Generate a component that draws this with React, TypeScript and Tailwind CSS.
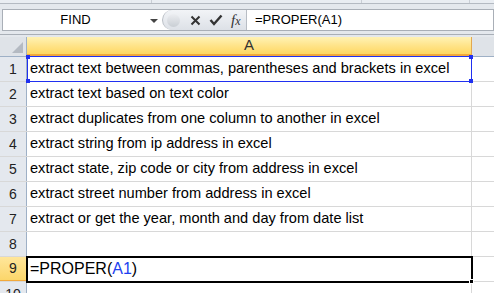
import React from "react";

const rows: string[] = [
  "extract text between commas, parentheses and brackets in excel",
  "extract text based on text color",
  "extract duplicates from one column to another in excel",
  "extract string from ip address in excel",
  "extract state, zip code or city from address in excel",
  "extract street number from address in excel",
  "extract or get the year, month and day from date list",
  "",
];

function FormulaBar() {
  return (
    <div className="flex h-[26px] items-center bg-[#e4e8ed] pl-[2px]">
      <div className="flex h-[22px] flex-1 items-stretch border border-[#a9afb7] bg-white">
        <div className="relative flex w-[159px] items-center justify-center text-[13px] text-black">
          <span className="mr-[14px]">FIND</span>
          <span className="absolute right-[4px] top-[9px] h-0 w-0 border-x-[4px] border-t-[4px] border-x-transparent border-t-[#444]" />
        </div>
        <div className="flex w-[84px] items-center rounded-l-full border-l border-[#b8bdc4] bg-gradient-to-b from-[#f2f4f7] to-[#dde1e7] pl-[4px]">
          <span className="h-[13px] w-[13px] rounded-full bg-gradient-to-b from-[#eceef1] to-[#c9ced4]" />
          <svg className="ml-[10px]" width="11" height="11" viewBox="0 0 11 11">
            <path d="M1.5 1.5 L9.5 9.5 M9.5 1.5 L1.5 9.5" stroke="#333" strokeWidth="2" />
          </svg>
          <svg className="ml-[8px]" width="14" height="12" viewBox="0 0 14 12">
            <path d="M1.5 6 L5 10 L12.5 1.5" stroke="#333" strokeWidth="2.4" fill="none" />
          </svg>
          <span className="ml-[8px] font-['Liberation_Serif',serif] text-[15px] italic text-[#333]">
            f<span className="text-[12px]">x</span>
          </span>
        </div>
        <div className="flex flex-1 items-center border-l border-[#b8bdc4] pl-[8px] text-[13px] text-black">
          =PROPER(A1)
        </div>
      </div>
    </div>
  );
}

function Row({ n, text }: { n: number; text: string }) {
  return (
    <div className="flex h-[25px] border-b border-[#d8d8d8]">
      <div className="flex w-[27px] shrink-0 items-center justify-center border-r border-[#9eb0c6] bg-[#e4e8ee] text-[14px] text-[#222]">
        {n}
      </div>
      <div className="flex w-[445px] shrink-0 items-center border-r border-[#d8d8d8] pl-[3px] text-[14.6px] text-black">
        {text}
      </div>
      <div className="flex-1" />
    </div>
  );
}

export default function App() {
  return (
    <div className="h-[293px] w-[494px] overflow-hidden bg-white font-['Liberation_Sans',Arial,sans-serif]">
      <div className="flex h-[4px] border-b border-[#b4bac2] bg-[#e9edf2]">
        <div className="w-[152px] border-r border-[#c9ced5]" />
        <div className="w-[210px] border-r border-[#c9ced5]" />
        <div className="w-[108px] border-r border-[#c9ced5]" />
      </div>
      <div className="h-[3px] bg-[#e4e8ed]" />
      <FormulaBar />
      <div className="h-[1px] bg-[#e4e8ed]" />
      <div className="h-[1px] bg-[#a9afb7]" />
      <div className="h-[2px] bg-[#e4e8ed]" />
      {/* column header */}
      <div className="flex h-[20px] border-b border-[#9eb0c6]">
        <div className="relative w-[27px] shrink-0 border-r border-[#9eb0c6] bg-[#dfe3e8]">
          <span className="absolute bottom-[3px] right-[3px] h-0 w-0 border-b-[11px] border-l-[11px] border-b-[#b4bac2] border-l-transparent" />
        </div>
        <div className="flex w-[445px] shrink-0 items-center justify-center border-b-2 border-r border-b-[#f2a93b] border-r-[#e2a850] bg-gradient-to-b from-[#fff2b4] via-[#ffe48a] to-[#ffd861] text-[15px] text-[#333]">
          A
        </div>
        <div className="flex-1 bg-[#dfe3e8]" />
      </div>
      <div className="relative">
        {rows.map((t, i) => (
          <Row key={i} n={i + 1} text={t} />
        ))}
        <div className="flex h-[25px] border-b border-[#d8d8d8]">
          <div className="flex w-[27px] shrink-0 items-center justify-center border-b border-r border-[#f2a93b] bg-gradient-to-b from-[#ffe69a] to-[#fbd66a] text-[14px] text-[#222]">
            9
          </div>
          <div className="flex w-[445px] shrink-0 items-center pl-[3px] text-[16px] text-black">
            =PROPER(<span className="text-[#1d3ff0]">A1</span>)
          </div>
          <div className="flex-1" />
        </div>
        <div className="flex h-[25px]">
          <div className="flex w-[27px] shrink-0 items-center justify-center border-r border-[#9eb0c6] bg-[#e4e8ee] text-[14px] text-[#222]">
            10
          </div>
          <div className="w-[445px] shrink-0 border-r border-[#d8d8d8]" />
        </div>
        {/* A1 reference highlight */}
        <div className="pointer-events-none absolute left-[27px] top-[-1px] h-[26px] w-[445px] border border-[#2030f0]">
          <span className="absolute -left-[2px] -top-[2px] h-[4px] w-[4px] bg-[#2030f0]" />
          <span className="absolute -right-[2px] -top-[2px] h-[4px] w-[4px] bg-[#2030f0]" />
          <span className="absolute -bottom-[2px] -left-[2px] h-[4px] w-[4px] bg-[#2030f0]" />
          <span className="absolute -bottom-[2px] -right-[2px] h-[4px] w-[4px] bg-[#2030f0]" />
        </div>
        {/* active cell A9 */}
        <div className="pointer-events-none absolute left-[26px] top-[199px] h-[27px] w-[447px] border-2 border-black">
          <span className="absolute -bottom-[3px] -right-[3px] h-[5px] w-[5px] border border-white bg-black" />
        </div>
      </div>
    </div>
  );
}
